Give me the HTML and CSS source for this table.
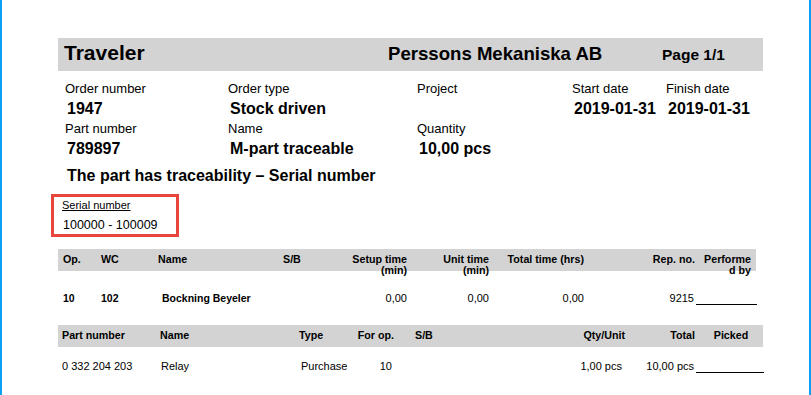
FILE: index.html
```html
<!DOCTYPE html>
<html lang="en">
<head>
    <meta charset="UTF-8">
    <title>Traveler</title>
    <link rel="stylesheet" href="styles.css">
</head>
<body>
<div class="viewer">
    <div class="sheet">
        <div class="title-bar">
            <span class="title">Traveler</span>
            <span class="company">Perssons Mekaniska AB</span>
            <span class="page-no">Page 1/1</span>
        </div>

        <div class="order-info">
            <div class="label">Order number</div>
            <div class="label">Order type</div>
            <div class="label">Project</div>
            <div class="label">Start date</div>
            <div class="label">Finish date</div>

            <div class="value">1947</div>
            <div class="value">Stock driven</div>
            <div class="value"></div>
            <div class="value">2019-01-31</div>
            <div class="value">2019-01-31</div>

            <div class="label">Part number</div>
            <div class="label">Name</div>
            <div class="label">Quantity</div>
            <div class="label"></div>
            <div class="label"></div>

            <div class="value">789897</div>
            <div class="value">M-part traceable</div>
            <div class="value">10,00 pcs</div>
            <div class="value"></div>
            <div class="value"></div>
        </div>

        <div class="trace-note">The part has traceability – Serial number</div>

        <div class="serial-box">
            <div class="serial-label">Serial number</div>
            <div class="serial-value">100000 - 100009</div>
        </div>

        <!-- operations -->
        <div class="ops-grid table-head ops-head">
            <div class="pl-5">Op.</div>
            <div class="pl-5">WC</div>
            <div class="pl-5">Name</div>
            <div class="pl-5">S/B</div>
            <div class="right">Setup time<br>(min)</div>
            <div class="right">Unit time<br>(min)</div>
            <div class="right">Total time (hrs)</div>
            <div class="right">Rep. no.</div>
            <div class="right pr-5">Performe<br>d by</div>
        </div>
        <div class="ops-grid table-row ops-row">
            <div class="pl-5 strong">10</div>
            <div class="pl-5 strong">102</div>
            <div class="pl-9 strong">Bockning Beyeler</div>
            <div></div>
            <div class="right">0,00</div>
            <div class="right">0,00</div>
            <div class="right">0,00</div>
            <div class="right pr-1">9215</div>
            <div><span class="sign-line sign-ops"></span></div>
        </div>

        <!-- parts -->
        <div class="parts-grid table-head parts-head">
            <div class="pl-4">Part number</div>
            <div class="pl-5">Name</div>
            <div class="pl-4">Type</div>
            <div class="right pr-2">For op.</div>
            <div class="pl-19">S/B</div>
            <div class="right">Qty/Unit</div>
            <div class="right">Total</div>
            <div class="center">Picked</div>
        </div>
        <div class="parts-grid table-row parts-row">
            <div class="pl-4">0 332 204 203</div>
            <div class="pl-6">Relay</div>
            <div class="pl-6">Purchase</div>
            <div class="right pr-4">10</div>
            <div></div>
            <div class="right pr-3">1,00 pcs</div>
            <div class="right pr-1">10,00 pcs</div>
            <div><span class="sign-line sign-parts"></span></div>
        </div>
    </div>
</div>
</body>
</html>
```

FILE: styles.css
```css
body {
    margin: 0;
    font-family: 'Liberation Sans', Arial, sans-serif;
    color: #000;
    background: #fff;
}
.viewer {
    width: 811px;
    height: 395px;
    box-sizing: border-box;
    border-left: 2px solid #0aa0f5;
    border-right: 2px solid #0aa0f5;
    overflow: hidden;
}
.sheet {
    padding: 38px 0 0 56px;
    width: 705px;
}

/* title band */
.title-bar {
    display: flex;
    align-items: baseline;
    height: 33px;
    box-sizing: border-box;
    padding: 3px 0 0 6px;
    background: #d3d3d3;
    font-weight: bold;
    white-space: nowrap;
}
.title {
    width: 324px;
    font-size: 21px;
}
.company {
    width: 274px;
    font-size: 18.6px;
}
.page-no {
    font-size: 15.5px;
}

/* order header fields */
.order-info {
    display: grid;
    grid-template-columns: 163px 189px 155px 94px 1fr;
    grid-template-rows: 17px 23px 17px 23px;
    margin-top: 9px;
    padding-left: 7px;
    white-space: nowrap;
}
.label {
    font-size: 13px;
    line-height: 17px;
}
.value {
    font-size: 16px;
    line-height: 23px;
    font-weight: bold;
    padding-left: 2px;
}
.trace-note {
    margin-top: 5px;
    padding-left: 9px;
    font-size: 16px;
    line-height: 22px;
    font-weight: bold;
}

/* serial number highlight */
.serial-box {
    width: 128px;
    box-sizing: border-box;
    margin: 7px 0 0 -7px;
    padding: 1px 0 1px 8px;
    border: 3px solid #e8453c;
}
.serial-label {
    font-size: 11px;
    line-height: 14px;
    text-decoration: underline;
}
.serial-value {
    margin-top: 5px;
    padding-left: 1px;
    font-size: 12.5px;
    line-height: 16px;
}

/* tables */
.ops-grid {
    display: grid;
    grid-template-columns: 38px 57px 125px 52px 77px 82px 95px 111px 61px;
    width: 698px;
}
.parts-grid {
    display: grid;
    grid-template-columns: 97px 140px 57px 44px 164px 65px 70px 68px;
    width: 705px;
}
.table-head {
    height: 22px;
    box-sizing: border-box;
    padding-top: 5px;
    background: #d3d3d3;
    font-size: 10.7px;
    line-height: 10.5px;
    font-weight: bold;
    white-space: nowrap;
}
.table-row {
    font-size: 11px;
    line-height: 14px;
    white-space: nowrap;
}
.ops-head {
    margin-top: 12px;
}
.ops-row {
    margin-top: 20px;
}
.parts-head {
    margin-top: 20px;
}
.parts-row {
    margin-top: 12px;
}
.strong {
    font-weight: bold;
    font-size: 10.5px;
}
.sign-line {
    display: block;
    height: 14px;
    box-sizing: border-box;
    margin-left: 1px;
    border-bottom: 1px solid #000;
}
.sign-ops {
    width: 61px;
}
.sign-parts {
    width: 68px;
}

.right { text-align: right; }
.center { text-align: center; padding-left: 4px; }
.pl-4 { padding-left: 4px; }
.pl-5 { padding-left: 5px; }
.pl-6 { padding-left: 6px; }
.pl-9 { padding-left: 9px; }
.pl-19 { padding-left: 19px; }
.pr-1 { padding-right: 1px; }
.pr-2 { padding-right: 2px; }
.pr-3 { padding-right: 3px; }
.pr-4 { padding-right: 4px; }
.pr-5 { padding-right: 5px; }
```
